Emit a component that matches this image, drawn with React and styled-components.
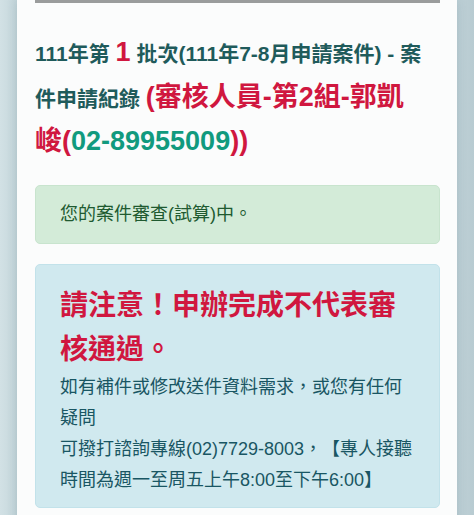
import React from "react";
import styled, { createGlobalStyle } from "styled-components";

const GlobalStyle = createGlobalStyle`
  html, body {
    margin: 0;
    padding: 0;
    background: #ccdce1;
    font-family: "Liberation Sans", "Noto Sans CJK TC", sans-serif;
    text-spacing-trim: space-all;
  }
`;

export default function App() {
  return (
    <>
      <GlobalStyle />
      <Page>
        <Card>
          <TopBar />
          <Title>
            111年第 <Big>1</Big> 批次(111年7-8月申請案件) - 案件申請紀錄{" "}
            <Big>
              (審核人員-第2組-郭凱峻(<Phone>02-89955009</Phone>))
            </Big>
          </Title>
          <Alert variant="success">您的案件審查(試算)中。</Alert>
          <Alert variant="info">
            <Warning>請注意！申辦完成不代表審核通過。</Warning>
            <Body>
              如有補件或修改送件資料需求，或您有任何疑問
              <br />
              可撥打諮詢專線(02)7729-8003，【專人接聽時間為週一至周五上午8:00至下午6:00】
            </Body>
          </Alert>
        </Card>
      </Page>
    </>
  );
}

const Page = styled.div`
  padding: 0 17px;
  height: 515px;
  overflow: hidden;
  background: linear-gradient(90deg, #d2e1e5 0%, #c3d5da 4%, #cfdee2 50%, #c0d2d8 96%, #b8cbd1 100%);
`;

const Card = styled.div`
  background: #fbfcfc;
  padding: 0 17px 20px 18px;
  min-height: 515px;
  box-sizing: border-box;
  box-shadow: 0 0 10px rgba(40, 80, 95, 0.18);
`;

const TopBar = styled.div`
  height: 3px;
  background: #9a9c9c;
`;

const Title = styled.h3`
  margin: 29px 0 19px;
  max-width: 393px;
  font-size: 21px;
  line-height: 44.5px;
  font-weight: 700;
  color: #1f5b5b;
`;

const Big = styled.span`
  color: #d0173f;
  font-size: 27px;
  line-height: 1;
`;

const Phone = styled.span`
  color: #119a7e;
`;

const Alert = styled.div`
  border-radius: 5px;
  margin-bottom: 20px;
  font-size: 18px;
  line-height: 25px;
  padding: ${(p) => (p.variant === "success" ? "16px 24px" : "19px 24px 11px")};
  background: ${(p) => (p.variant === "success" ? "#d3ebd8" : "#d0e9ef")};
  border: 1px solid ${(p) => (p.variant === "success" ? "#c8e4ce" : "#c2e2ea")};
  color: ${(p) => (p.variant === "success" ? "#205a30" : "#195663")};
`;

const Warning = styled.div`
  color: #d0173f;
  font-size: 28px;
  font-weight: 700;
  line-height: 44px;
`;

const Body = styled.div`
  line-height: 31px;
`;
